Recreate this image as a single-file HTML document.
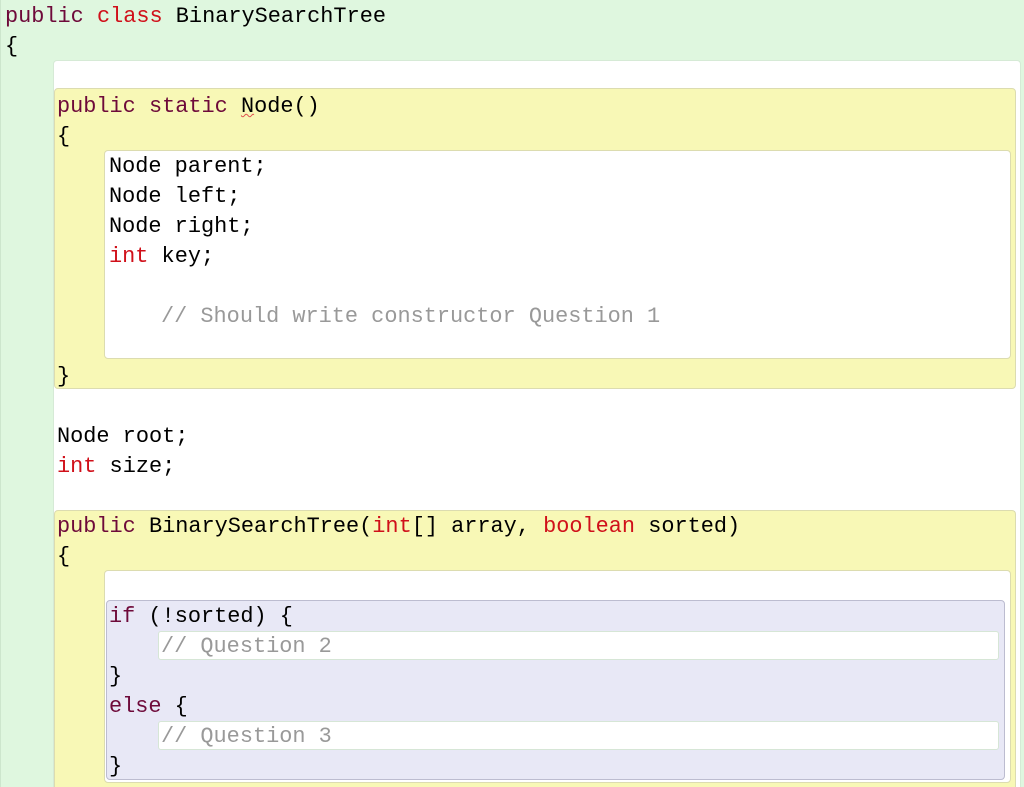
<!DOCTYPE html>
<html><head><style>
html,body{margin:0;width:1024px;height:787px;overflow:hidden}
body{background:#fff;position:relative;font-family:"Liberation Mono",monospace;font-size:21.9px}
.b{position:absolute;box-sizing:border-box}
.l{position:absolute;left:0;height:30px;line-height:30px;white-space:pre;color:#000;margin-top:2px}
.k{color:#6e0a3a}.r{color:#d0101a}.c{color:#999}
</style></head><body>
<div class="b" style="left:0;top:0;width:1024px;height:787px;background:#dff7df;border-left:1px solid #cde6cd;"></div>
<div class="b" style="left:53px;top:60px;width:968px;height:727px;background:#fff;border:1px solid #d6ead6;border-bottom:none;border-radius:4px 4px 0 0"></div>
<div class="b" style="left:54px;top:88px;width:962px;height:301px;background:#f8f8b6;border:1px solid #dcdcb0;border-radius:4px"></div>
<div class="b" style="left:104px;top:150px;width:907px;height:209px;background:#fff;border:1px solid #dcdcb0;border-radius:4px"></div>
<div class="b" style="left:54px;top:510px;width:962px;height:277px;background:#f8f8b6;border:1px solid #dcdcb0;border-bottom:none;border-radius:4px 4px 0 0"></div>
<div class="b" style="left:104px;top:570px;width:907px;height:213px;background:#fff;border:1px solid #dcdcb0;border-radius:4px"></div>
<div class="b" style="left:106px;top:600px;width:899px;height:180px;background:#e8e8f6;border:1px solid #bcbcd0;border-radius:4px"></div>
<div class="b" style="left:158px;top:631px;width:841px;height:29px;background:#fff;border:1px solid #d6e6d6;border-radius:3px"></div>
<div class="b" style="left:158px;top:721px;width:841px;height:29px;background:#fff;border:1px solid #d6e6d6;border-radius:3px"></div>

<div class="l" style="top:0;left:5px"><span class="k">public</span> <span class="r">class</span> BinarySearchTree</div>
<div class="l" style="top:30px;left:5px">{</div>
<div class="l" style="top:90px;left:57px"><span class="k">public</span> <span class="k">static</span> <span style="text-decoration:underline wavy #e05050;text-decoration-thickness:1px">N</span>ode()</div>
<div class="l" style="top:120px;left:57px">{</div>
<div class="l" style="top:150px;left:109px">Node parent;</div>
<div class="l" style="top:180px;left:109px">Node left;</div>
<div class="l" style="top:210px;left:109px">Node right;</div>
<div class="l" style="top:240px;left:109px"><span class="r">int</span> key;</div>
<div class="l c" style="top:300px;left:161px">// Should write constructor Question 1</div>
<div class="l" style="top:360px;left:57px">}</div>
<div class="l" style="top:420px;left:57px">Node root;</div>
<div class="l" style="top:450px;left:57px"><span class="r">int</span> size;</div>
<div class="l" style="top:510px;left:57px"><span class="k">public</span> BinarySearchTree(<span class="r">int</span>[] array, <span class="r">boolean</span> sorted)</div>
<div class="l" style="top:540px;left:57px">{</div>
<div class="l" style="top:600px;left:109px"><span class="k">if</span> (!sorted) {</div>
<div class="l c" style="top:630px;left:161px">// Question 2</div>
<div class="l" style="top:660px;left:109px">}</div>
<div class="l" style="top:690px;left:109px"><span class="k">else</span> {</div>
<div class="l c" style="top:720px;left:161px">// Question 3</div>
<div class="l" style="top:750px;left:109px">}</div>
</body></html>
